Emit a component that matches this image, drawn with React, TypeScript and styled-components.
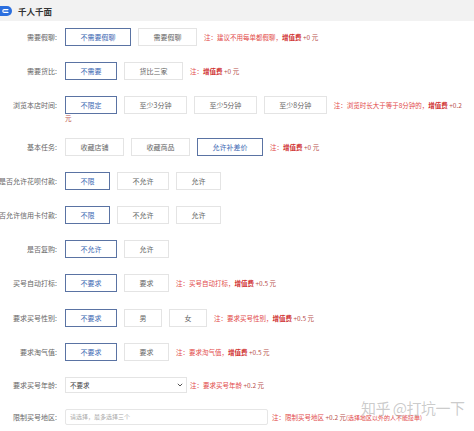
import styled, { createGlobalStyle } from 'styled-components';

const GlobalStyle = createGlobalStyle`
  html, body {
    margin: 0;
    padding: 0;
    background: #fff;
  }
  body {
    font-family: 'Noto Sans CJK SC', 'Noto Sans', sans-serif;
  }
`;

const Page = styled.div`
  position: relative;
  width: 474px;
  height: 431px;
  overflow: hidden;
  background: #fff;
`;

const Header = styled.div`
  height: 21px;
  background: #f2f2f2;
  display: flex;
  align-items: center;
  gap: 5px;
  color: #333;
  font-size: 8.5px;
  font-weight: bold;
`;

const Form = styled.div`
  padding: 7px 6px 0 0;
`;

const Row = styled.div`
  display: flex;
  align-items: flex-start;
  margin-bottom: 16.2px;
`;

const Label = styled.div<{ $h: number }>`
  width: 57px;
  flex-shrink: 0;
  display: flex;
  justify-content: flex-end;
  white-space: nowrap;
  font-size: 7px;
  line-height: ${({ $h }) => $h}px;
  color: #666;
`;

const Content = styled.div`
  flex: 1;
  min-width: 0;
  margin-left: 8px;
  font-size: 7px;
  line-height: 6px;
`;

const Option = styled.span<{ $active?: boolean }>`
  display: inline-block;
  vertical-align: middle;
  box-sizing: border-box;
  height: 18px;
  line-height: 16px;
  padding: 0 14.5px;
  margin-right: 7px;
  border: 1px solid ${({ $active }) => ($active ? '#5a73a3' : '#e4e4e4')};
  color: ${({ $active }) => ($active ? '#3d68b3' : '#666')};
  background: #fff;
  white-space: nowrap;
`;

const Select = styled.span`
  display: inline-flex;
  vertical-align: middle;
  align-items: center;
  justify-content: space-between;
  box-sizing: border-box;
  width: 122px;
  height: 16px;
  padding: 0 3px 0 4px;
  margin-right: 3px;
  border: 1px solid #e4e4e4;
  color: #444;
  font-size: 6.5px;
`;

const Input = styled.span`
  display: inline-flex;
  vertical-align: middle;
  align-items: center;
  box-sizing: border-box;
  width: 203px;
  height: 16px;
  padding-left: 4px;
  margin-right: 4px;
  border: 1px solid #e6e6e6;
  border-radius: 2px;
  color: #aaa;
  font-size: 6px;
`;

const Note = styled.span`
  vertical-align: middle;
  color: #e24a4a;
  font-size: 6.5px;
`;

const Fee = styled.b`
  color: #cf2f2f;
`;

const Price = styled.span`
  color: #b8504c;
`;

const Small = styled.span`
  font-size: 6px;
`;

const Watermark = styled.div`
  position: absolute;
  left: 361px;
  top: 397px;
  font-size: 15px;
  letter-spacing: -0.5px;
  color: rgba(140, 140, 140, 0.45);
  white-space: nowrap;
`;

type NoteInfo = { text?: string; fee?: boolean; price: string; extra?: string };
type RowInfo = {
  label: string;
  kind?: 'options' | 'select' | 'input';
  options?: string[];
  active?: number;
  value?: string;
  note?: NoteInfo;
};

const rows: RowInfo[] = [
  { label: '需要假聊:', options: ['不需要假聊', '需要假聊'], active: 0, note: { text: '建议不用每单都假聊，', fee: true, price: '+0 元' } },
  { label: '需要货比:', options: ['不需要', '货比三家'], active: 0, note: { fee: true, price: '+0 元' } },
  { label: '浏览本店时间:', options: ['不限定', '至少3分钟', '至少5分钟', '至少8分钟'], active: 0, note: { text: '浏览时长大于等于8分钟的，', fee: true, price: '+0.2 元' } },
  { label: '基本任务:', options: ['收藏店铺', '收藏商品', '允许补差价'], active: 2, note: { fee: true, price: '+0 元' } },
  { label: '是否允许花呗付款:', options: ['不限', '不允许', '允许'], active: 0 },
  { label: '是否允许信用卡付款:', options: ['不限', '不允许', '允许'], active: 0 },
  { label: '是否复购:', options: ['不允许', '允许'], active: 0 },
  { label: '买号自动打标:', options: ['不要求', '要求'], active: 0, note: { text: '买号自动打标，', fee: true, price: '+0.5 元' } },
  { label: '要求买号性别:', options: ['不要求', '男', '女'], active: 0, note: { text: '要求买号性别，', fee: true, price: '+0.5 元' } },
  { label: '要求淘气值:', options: ['不要求', '要求'], active: 0, note: { text: '要求淘气值，', fee: true, price: '+0.5 元' } },
  { label: '要求买号年龄:', kind: 'select', value: '不要求', note: { text: '要求买号年龄 ', price: '+0.2 元' } },
  { label: '限制买号地区:', kind: 'input', value: '请选择，最多选择三个', note: { text: '限制买号地区 ', price: '+0.2 元', extra: '(选择地区以外的人不能接单)' } },
];

const Logo = () => (
  <svg width="13" height="10" viewBox="0 0 13 10">
    <rect x="-4" y="0" width="16" height="10" rx="5" fill="#2b6fdf" />
    <path d="M8 3.6H4.2a1.4 1.4 0 0 0 0 2.8H8" fill="none" stroke="#fff" strokeWidth="1.1" strokeLinecap="round" />
  </svg>
);

const Chevron = () => (
  <svg width="6" height="4" viewBox="0 0 6 4">
    <path d="M0.8 0.8L3 3L5.2 0.8" fill="none" stroke="#555" strokeWidth="1" />
  </svg>
);

const NoteText = ({ note }: { note: NoteInfo }) => (
  <Note>
    注：{note.text}
    {note.fee ? <Fee>增值费</Fee> : null}
    {note.fee ? ' ' : null}
    <Price>{note.price}</Price>
    {note.extra ? <Small>{note.extra}</Small> : null}
  </Note>
);

export default function App() {
  return (
    <Page>
      <GlobalStyle />
      <Header>
        <Logo />
        <span>千人千面</span>
      </Header>
      <Form>
        {rows.map((r) => {
          const kind = r.kind ?? 'options';
          return (
            <Row key={r.label}>
              <Label $h={kind === 'options' ? 18 : 16}>{r.label}</Label>
              <Content>
                {kind === 'options'
                  ? r.options!.map((o, i) => (
                      <Option key={o} $active={i === r.active}>
                        {o}
                      </Option>
                    ))
                  : null}
                {kind === 'select' ? (
                  <Select>
                    {r.value}
                    <Chevron />
                  </Select>
                ) : null}
                {kind === 'input' ? <Input>{r.value}</Input> : null}
                {r.note ? <NoteText note={r.note} /> : null}
              </Content>
            </Row>
          );
        })}
      </Form>
      <Watermark>知乎 @打坑一下</Watermark>
    </Page>
  );
}
